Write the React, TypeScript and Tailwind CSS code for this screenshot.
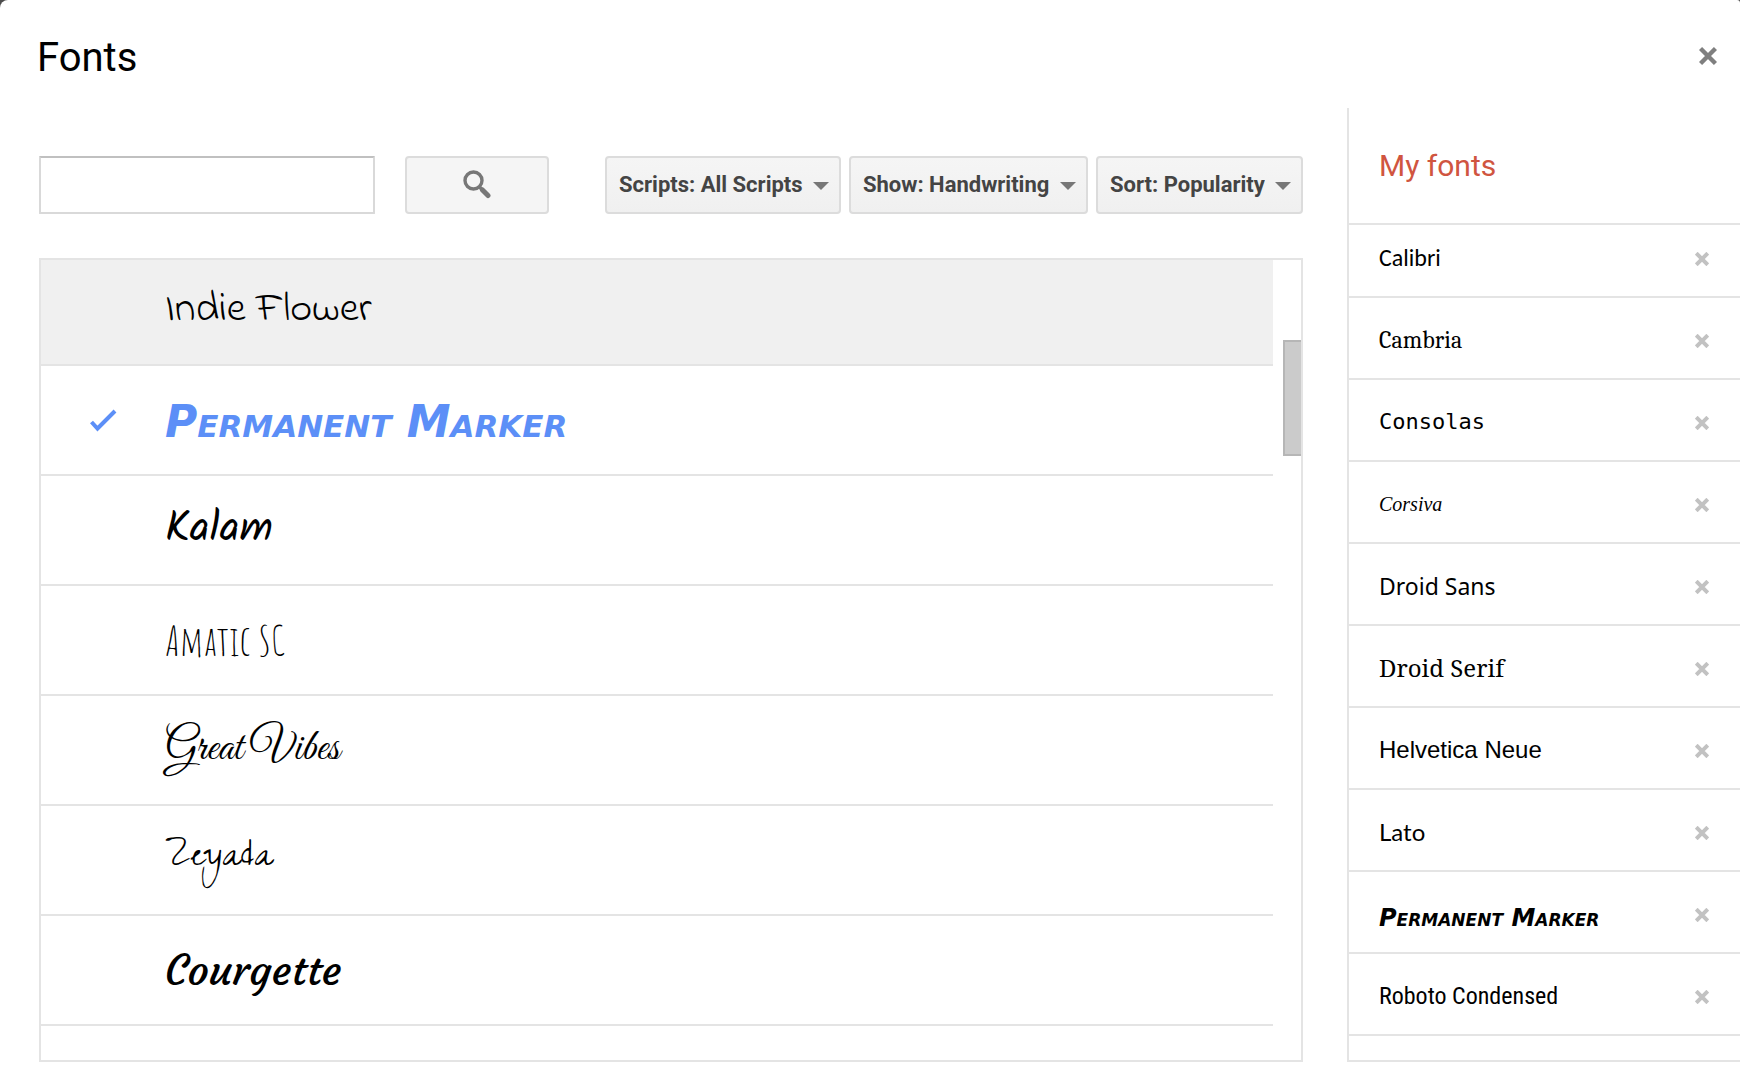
import { useState } from "react";

type FontEntry = {
  name: string;
  className: string;
};

const catalog: FontEntry[] = [
  {
    name: "Indie Flower",
    className: "text-[42px] font-['Indie_Flower','Open_Sans',cursive]",
  },
  {
    name: "Permanent Marker",
    className:
      "pt-1 text-[44px] font-bold italic [font-variant:small-caps] font-['Permanent_Marker','DejaVu_Sans',cursive]",
  },
  {
    name: "Kalam",
    className: "text-[42px] font-['Kalam','Open_Sans',cursive]",
  },
  {
    name: "Amatic SC",
    className: "text-[42px] font-['Amatic_SC','Roboto_Condensed','Open_Sans',cursive]",
  },
  {
    name: "Great Vibes",
    className: "text-[44px] font-['Great_Vibes','Liberation_Serif',cursive]",
  },
  {
    name: "Zeyada",
    className: "text-[42px] font-['Zeyada','Lato',cursive]",
  },
  {
    name: "Courgette",
    className: "text-[42px] font-['Courgette','Lato',cursive]",
  },
];

const myFonts: FontEntry[] = [
  { name: "Calibri", className: "text-[24px] font-['Calibri','Carlito','Lato',sans-serif]" },
  { name: "Cambria", className: "text-[24px] font-['Cambria','Caladea','DejaVu_Serif',serif]" },
  { name: "Consolas", className: "text-[22px] font-['Consolas','DejaVu_Sans_Mono',monospace]" },
  { name: "Corsiva", className: "text-[20px] italic font-['Corsiva','Liberation_Serif',serif]" },
  { name: "Droid Sans", className: "text-[23px] font-['Droid_Sans','Noto_Sans',sans-serif]" },
  { name: "Droid Serif", className: "text-[24px] font-['Droid_Serif','Noto_Serif','DejaVu_Serif',serif]" },
  { name: "Helvetica Neue", className: "text-[24px] font-['Liberation_Sans',sans-serif]" },
  { name: "Lato", className: "text-[24px] font-['Lato',sans-serif]" },
  {
    name: "Permanent Marker",
    className:
      "pt-2 text-[24px] font-bold italic [font-variant:small-caps] font-['Permanent_Marker','DejaVu_Sans',cursive]",
  },
  {
    name: "Roboto Condensed",
    className: "text-[24px] font-['Roboto_Condensed','Roboto',sans-serif]",
  },
];

const filters = [
  { label: "Scripts", value: "Scripts: All Scripts" },
  { label: "Show", value: "Show: Handwriting" },
  { label: "Sort", value: "Sort: Popularity" },
];

function CrossIcon({ className, strokeWidth }: { className: string; strokeWidth: number }) {
  return (
    <svg viewBox="0 0 14 14" fill="none" stroke="currentColor" strokeWidth={strokeWidth} className={className}>
      <path d="M1.2 1.2 12.8 12.8M12.8 1.2 1.2 12.8" />
    </svg>
  );
}

function Filter({ label, value }: { label: string; value: string }) {
  return (
    <div className="relative">
      <select
        aria-label={label}
        className="h-[58px] appearance-none rounded-sm border-2 border-[#dcdcdc] bg-linear-to-b from-[#f5f5f5] to-[#f0f0f0] pr-9 pl-3 pb-0.5 text-[22px] font-bold text-[#444]"
      >
        <option>{value}</option>
      </select>
      <svg viewBox="0 0 16 8" className="pointer-events-none absolute top-[26px] right-3 h-2 w-4">
        <path d="M0 0H16L8 8Z" fill="#777" />
      </svg>
    </div>
  );
}

export default function App() {
  const [selected, setSelected] = useState("Permanent Marker");

  return (
    <div className="h-screen bg-[#4d4d4d] font-['Roboto',sans-serif] text-black">
      <div className="flex h-full flex-col rounded-tl-lg rounded-tr-[3px] bg-white pb-7">
        <header className="flex h-27 shrink-0 items-center justify-between pt-1 pr-[23px] pl-[37px]">
          <h1 className="pt-1 text-[40px]">Fonts</h1>
          <button aria-label="Close" className="text-[#7f7f7f]">
            <CrossIcon className="size-[18px]" strokeWidth={3.4} />
          </button>
        </header>

        <div className="flex min-h-0 flex-1">
          <main className="flex min-w-0 flex-1 flex-col gap-11 pt-12 pr-11 pl-[39px]">
            <div className="flex items-center">
              <input
                type="text"
                aria-label="Search fonts"
                className="h-[58px] w-[336px] rounded-[1px] border-2 border-[#d9d9d9] border-t-[#c0c0c0] px-3 text-[22px] outline-none"
              />
              <button
                aria-label="Search"
                className="ml-[30px] flex h-[58px] w-36 items-center justify-center rounded-sm border-2 border-[#dcdcdc] bg-[#f5f5f5] pb-0.5"
              >
                <svg viewBox="0 0 28 29" fill="none" stroke="#777" className="h-[29px] w-7">
                  <circle cx="10.5" cy="10.5" r="8.5" strokeWidth="3.4" />
                  <path d="M16.5 17 20 20.5" strokeWidth="3.4" />
                  <path d="M19.5 20 25 25.5" strokeWidth="5" strokeLinecap="round" />
                </svg>
              </button>
              <div className="ml-auto flex gap-2">
                {filters.map((filter) => (
                  <Filter key={filter.label} {...filter} />
                ))}
              </div>
            </div>

            {/* Font catalog */}
            <div className="flex min-h-0 flex-1 justify-between overflow-hidden border-2 border-[#e4e4e4]">
              <ul className="-mt-1 mr-[10px] flex-1">
                {catalog.map((font, i) => (
                  <li key={font.name} className={i === 0 ? "bg-[#f0f0f0]" : ""}>
                    <button
                      onClick={() => setSelected(font.name)}
                      className={`flex h-[110px] w-full items-center border-b-2 border-[#e4e4e4] text-left ${
                        font.name === selected ? "text-[#5c8ff7]" : ""
                      }`}
                    >
                      <span className="flex w-[124px] shrink-0 justify-center">
                        {font.name === selected && (
                          <svg viewBox="0 0 27 23" fill="none" stroke="currentColor" strokeWidth="4" className="h-[23px] w-[27px]">
                            <path d="M1.5 13 7.5 19.5 25 2" />
                          </svg>
                        )}
                      </span>
                      <span className={`leading-[56px] whitespace-nowrap ${font.className}`}>{font.name}</span>
                    </button>
                  </li>
                ))}
              </ul>
              <div className="w-[18px] pt-20">
                <div className="h-[116px] border-y-2 border-l-2 border-[#b6b6b6] bg-[#cbcbcb]" />
              </div>
            </div>
          </main>

          {/* Saved fonts */}
          <aside className="flex w-[393px] shrink-0 flex-col border-b-2 border-l-2 border-[#e4e4e4]">
            <h2 className="flex h-[117px] shrink-0 items-center border-b-2 border-[#e4e4e4] pl-[30px] text-[30px] text-[#d05540]">
              My fonts
            </h2>
            <div className="min-h-0 flex-1 overflow-hidden">
              <ul className="-mt-[9px]">
                {myFonts.map((font) => (
                  <li
                    key={font.name}
                    className="flex h-[82px] items-center justify-between border-b-2 border-[#e4e4e4] pt-1.5 pr-[31px] pl-[30px]"
                  >
                    <span className={`pb-0.5 leading-8 whitespace-nowrap ${font.className}`}>{font.name}</span>
                    <button aria-label={`Remove ${font.name}`} className="text-[#c2c2c2]">
                      <CrossIcon className="size-3.5" strokeWidth={4} />
                    </button>
                  </li>
                ))}
              </ul>
            </div>
          </aside>
        </div>
      </div>
    </div>
  );
}
